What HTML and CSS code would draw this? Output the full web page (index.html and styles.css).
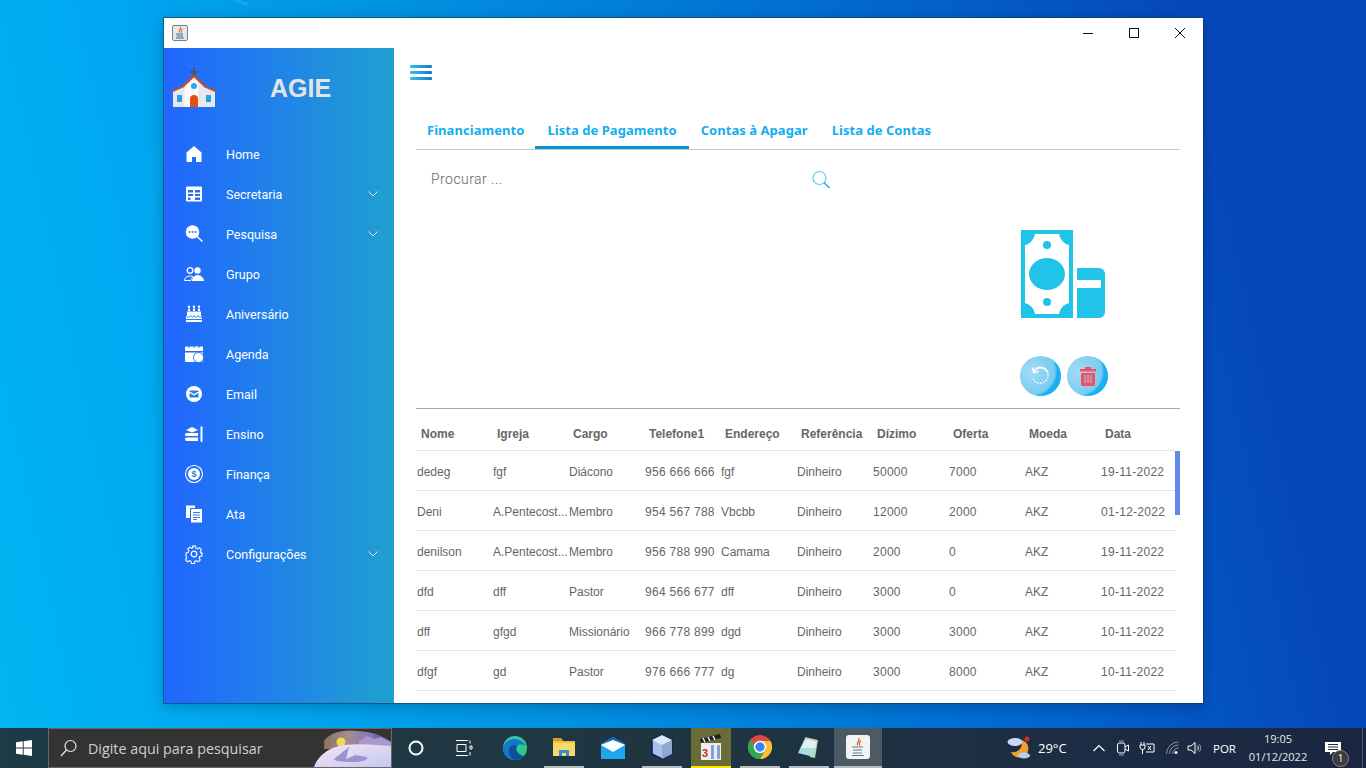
FILE: index.html
```html
<!DOCTYPE html>
<html lang="pt">
<head>
  <meta charset="UTF-8">
  <title>AGIE</title>
  <link rel="stylesheet" href="styles.css">
</head>
<body>
  <div class="desktop">
    <div class="streak"></div>

    <div class="window">
      <div class="titlebar">
        <svg class="app-icon" width="16" height="16" viewBox="0 0 16 16"><rect x=".5" y=".5" width="15" height="15" rx="1.5" fill="#e6e9ee" stroke="#6f8296"/><path d="M8.500 2c1.200 2-2.500 3-1 5.500M10.500 4c-1.500 1-1.500 2.500-.5 3.500" stroke="#f07818" stroke-width="1.300" fill="none"/><path d="M4 9h7M4.500 11h6.500M4 13h8" stroke="#44688e"/></svg>
        <div class="win-btns">
          <svg width="12" height="12" viewBox="0 0 12 12"><path d="M1 6.500h10" stroke="#111"/></svg>
          <svg width="12" height="12" viewBox="0 0 12 12"><rect x="1.500" y="1.500" width="9" height="9" fill="none" stroke="#111"/></svg>
          <svg width="12" height="12" viewBox="0 0 12 12"><path d="M1 1l10 10M11 1L1 11" stroke="#111"/></svg>
        </div>
      </div>

      <div class="app">
        <aside class="sidebar">
          <div class="brand">
            <svg class="church" width="44" height="40" viewBox="0 0 44 40">
              <path d="M21.200 0h1.600v3h3v1.600h-3V8h-1.600V4.600h-3V3h3z" fill="#5d4a40"/>
              <path d="M1 23l12-6v22H1z" fill="#e4e8ec"/>
              <path d="M43 23l-12-6v22h12z" fill="#e4e8ec"/>
              <path d="M12.500 16.500L22 8l9.500 8.500V39h-19z" fill="#fafafa"/>
              <path d="M31.500 39H26V12l5.500 4.500z" fill="#e6eaee"/>
              <path d="M0 23.500l12.500-5.500M44 23.500l-12.500-5.500" stroke="#d4451a" stroke-width="1.800" fill="none"/>
              <path d="M12 17.500L22 8l10 9.500" stroke="#d4451a" stroke-width="2" fill="none"/>
              <circle cx="22" cy="18" r="3" fill="#2aa8e8"/>
              <path d="M18 39v-8a4 4 0 0 1 8 0v8z" fill="#e2500f"/>
              <rect x="5" y="27" width="5" height="7" fill="#2aa0e0"/>
              <rect x="34" y="27" width="5" height="7" fill="#2aa0e0"/>
            </svg>
            <span class="brand-name">AGIE</span>
          </div>

          <nav class="menu">
            <div class="menu-item">
              <svg class="menu-icon" viewBox="0 0 20 20"><path d="M10 2l7.500 6.500V18H12v-5H8v5H2.500V8.500z" fill="#fff"/></svg>
              <span>Home</span>
            </div>
            <div class="menu-item">
              <svg class="menu-icon" viewBox="0 0 20 20"><path fill-rule="evenodd" d="M3 2.500h14a1 1 0 0 1 1 1v13a1 1 0 0 1-1 1H3a1 1 0 0 1-1-1v-13a1 1 0 0 1 1-1zM4 6v2.500h5V6zm7 0v2.500h5V6zM4 10v2h5v-2zm7 0v2h5v-2zm-7 3.500V16h2.500v-2.500zm7 0V16h5v-2.500z" fill="#fff"/></svg>
              <span>Secretaria</span>
              <svg class="chevron" width="10" height="6" viewBox="0 0 10 6"><path d="M.5.500L5 5 9.500.500" fill="none" stroke="#dfeaf8"/></svg>
            </div>
            <div class="menu-item">
              <svg class="menu-icon" viewBox="0 0 20 20"><circle cx="8.500" cy="8" r="6.800" fill="#fff"/><path d="M13 12.500l5.500 5" stroke="#fff" stroke-width="1.600"/><circle cx="5.500" cy="8" r="1" fill="#2a7ce8"/><circle cx="8.500" cy="8" r="1" fill="#2a7ce8"/><circle cx="11.500" cy="8" r="1" fill="#2a7ce8"/></svg>
              <span>Pesquisa</span>
              <svg class="chevron" width="10" height="6" viewBox="0 0 10 6"><path d="M.5.500L5 5 9.500.500" fill="none" stroke="#dfeaf8"/></svg>
            </div>
            <div class="menu-item">
              <svg class="menu-icon" viewBox="0 0 20 20"><circle cx="6" cy="6.500" r="2.800" fill="none" stroke="#fff" stroke-width="1.300"/><circle cx="13.500" cy="6.500" r="3.200" fill="#fff"/><path d="M.5 16.500c0-2.500 2.500-4.500 5.500-4.500 1.200 0 2.300.3 3 .7-1.300 1-2 2.500-2 3.800z" fill="none" stroke="#fff" stroke-width="1"/><path d="M8 17c0-3 2.500-6 5.500-6s6.500 3 6.500 6z" fill="#fff"/></svg>
              <span>Grupo</span>
            </div>
            <div class="menu-item">
              <svg class="menu-icon" viewBox="0 0 20 20"><circle cx="5" cy="2.800" r="1.200" fill="#fff"/><circle cx="10" cy="2.800" r="1.200" fill="#fff"/><circle cx="15" cy="2.800" r="1.200" fill="#fff"/><path d="M4 4.500h2v2.500H4zM9 4.500h2v2.500H9zM14 4.500h2v2.500h-2z" fill="#fff"/><path d="M3 7.500h14V12H3zM2 12h16v6H2z" fill="#fff"/><path d="M2 11.500c2 2.500 3 2.500 4.500 0 1.500 2.500 3 2.500 3.500 0 1.500 2.500 3 2.500 4 0 1 1.500 2.500 2 4 1.500M2 15.500h16" stroke="#2a7ce8" stroke-width="1" fill="none"/></svg>
              <span>Aniversário</span>
            </div>
            <div class="menu-item">
              <svg class="menu-icon" viewBox="0 0 20 20"><path d="M2 2.500h16a1 1 0 0 1 1 1V7H1V3.500a1 1 0 0 1 1-1zM1 8.500h18V17a1 1 0 0 1-1 1H2a1 1 0 0 1-1-1z" fill="#fff"/><path d="M5 2v2M10 2v2M15 2v2" stroke="#2a7ce8"/><circle cx="14.500" cy="13.500" r="5" fill="#fff" stroke="#2a7ce8"/></svg>
              <span>Agenda</span>
            </div>
            <div class="menu-item">
              <svg class="menu-icon" viewBox="0 0 20 20"><circle cx="10" cy="10" r="8" fill="#fff"/><path d="M5.500 6.500h9v1L10 10 5.500 7.500zM5.500 9l4.500 2.500L14.500 9v4.500h-9z" fill="#2a7ce8"/></svg>
              <span>Email</span>
            </div>
            <div class="menu-item">
              <svg class="menu-icon" viewBox="0 0 20 20"><path d="M2 6l6-3 6 3-6 2.500z" fill="#fff"/><path d="M3 9h11v3H3a1.500 1.500 0 0 1-2-1.500A1.500 1.500 0 0 1 3 9zM3 13.500h11v3.500H3a1.700 1.700 0 0 1-2-1.700 1.700 1.700 0 0 1 2-1.800z" fill="#fff"/><path d="M16.500 2.500H18.500V17l-1 1.500-1-1.500z" fill="#fff"/></svg>
              <span>Ensino</span>
            </div>
            <div class="menu-item">
              <svg class="menu-icon" viewBox="0 0 20 20"><circle cx="10" cy="10" r="8.500" fill="none" stroke="#fff" stroke-width="1.100"/><circle cx="10" cy="10" r="6" fill="#fff"/><text x="10" y="13" class="coin-mark">$</text></svg>
              <span>Finança</span>
            </div>
            <div class="menu-item">
              <svg class="menu-icon" viewBox="0 0 20 20"><path d="M2 1.500h9v2.500H6v10H2z" fill="#fff"/><path d="M7 5h11v13.500H7z" fill="#fff"/><path d="M9 8.500h7M9 11h7M9 13.500h7M9 15.500h4" stroke="#2a7ce8"/></svg>
              <span>Ata</span>
            </div>
            <div class="menu-item">
              <svg class="menu-icon" viewBox="0 0 20 20"><circle cx="10" cy="10" r="2.800" fill="none" stroke="#fff" stroke-width="1.200"/><path d="M8.500 2h3l.4 2.200 1.600.7 1.900-1.200 2 2-1.200 1.900.7 1.600L18 9v3l-2.200.4-.7 1.600 1.200 1.900-2 2-1.900-1.200-1.600.7-.4 2.100h-3l-.4-2.100-1.600-.7-1.900 1.200-2-2 1.200-1.900-.7-1.600L2 12V9l2.200-.4.700-1.600-1.200-1.900 2-2 1.900 1.200 1.500-.7z" fill="none" stroke="#fff" stroke-width="1.100"/></svg>
              <span>Configurações</span>
              <svg class="chevron" width="10" height="6" viewBox="0 0 10 6"><path d="M.5.500L5 5 9.500.500" fill="none" stroke="#dfeaf8"/></svg>
            </div>
          </nav>
        </aside>

        <main class="content">
          <div class="hamburger"><i></i><i></i><i></i></div>

          <div class="tabs">
            <div class="tab">Financiamento</div>
            <div class="tab active">Lista de Pagamento</div>
            <div class="tab">Contas à Apagar</div>
            <div class="tab">Lista de Contas</div>
          </div>

          <div class="search">
            <span class="search-text">Procurar ...</span>
            <svg class="search-icon" width="20" height="20" viewBox="0 0 20 20"><circle cx="8.500" cy="8" r="6.500" fill="none" stroke="#5cd0ee" stroke-width="1.200"/><path d="M13 12.500l5.500 5.500" stroke="#38a8d8" stroke-width="1.500"/></svg>
          </div>

          <div class="tools">
            <svg class="money" width="84" height="88" viewBox="0 0 84 88">
              <rect width="52" height="88" fill="#22c3e8"/>
              <path d="M14 4h24q2 9 10 11v58q-8 2-10 11H14q-2-9-10-11V15q8-2 10-11z" fill="#fff"/>
              <circle cx="26" cy="15" r="4" fill="#22c3e8"/>
              <circle cx="26" cy="72" r="4" fill="#22c3e8"/>
              <ellipse cx="26" cy="44" rx="18" ry="16" fill="#22c3e8"/>
              <path d="M56 38h22a6 6 0 0 1 6 6v38a6 6 0 0 1-6 6H56z" fill="#22c3e8"/>
              <rect x="56" y="50" width="24" height="8" fill="#fff"/>
            </svg>
            <div class="round-btns">
              <div class="round-btn">
                <svg width="22" height="22" viewBox="0 0 22 22"><path d="M4 5a8 8 0 1 1 -1 9" fill="none" stroke="#fff" stroke-width="1.500" stroke-dasharray="1.500 1.500"/><path d="M4 6.500a8 8 0 0 1 14 1" fill="none" stroke="#fff" stroke-width="1.500"/><path d="M2.500 2.500l1 5 5-1" fill="none" stroke="#fff" stroke-width="1.500"/></svg>
              </div>
              <div class="round-btn">
                <svg width="18" height="20" viewBox="0 0 18 20"><path d="M6 1h6v2h5v2.500H1V3h5z" fill="#f25060"/><path d="M2 7h14v11a2 2 0 0 1-2 2H4a2 2 0 0 1-2-2z" fill="#f25060"/><path d="M6 9v8M9 9v8M12 9v8" stroke="#8ccaf0" stroke-width="1.200"/></svg>
              </div>
            </div>
          </div>

          <div class="table">
            <div class="t-head">
              <span>Nome</span><span>Igreja</span><span>Cargo</span><span>Telefone1</span><span>Endereço</span><span>Referência</span><span>Dízimo</span><span>Oferta</span><span>Moeda</span><span>Data</span>
            </div>
            <div class="t-body">
              <div class="t-rows">
                <div class="t-row"><span>dedeg</span><span>fgf</span><span>Diácono</span><span>956 666 666</span><span>fgf</span><span>Dinheiro</span><span>50000</span><span>7000</span><span>AKZ</span><span>19-11-2022</span></div>
                <div class="t-row"><span>Deni</span><span>A.Pentecost...</span><span>Membro</span><span>954 567 788</span><span>Vbcbb</span><span>Dinheiro</span><span>12000</span><span>2000</span><span>AKZ</span><span>01-12-2022</span></div>
                <div class="t-row"><span>denilson</span><span>A.Pentecost...</span><span>Membro</span><span>956 788 990</span><span>Camama</span><span>Dinheiro</span><span>2000</span><span>0</span><span>AKZ</span><span>19-11-2022</span></div>
                <div class="t-row"><span>dfd</span><span>dff</span><span>Pastor</span><span>964 566 677</span><span>dff</span><span>Dinheiro</span><span>3000</span><span>0</span><span>AKZ</span><span>10-11-2022</span></div>
                <div class="t-row"><span>dff</span><span>gfgd</span><span>Missionário</span><span>966 778 899</span><span>dgd</span><span>Dinheiro</span><span>3000</span><span>3000</span><span>AKZ</span><span>10-11-2022</span></div>
                <div class="t-row"><span>dfgf</span><span>gd</span><span>Pastor</span><span>976 666 777</span><span>dg</span><span>Dinheiro</span><span>3000</span><span>8000</span><span>AKZ</span><span>10-11-2022</span></div>
              </div>
              <div class="scrollbar"><div class="thumb"></div></div>
            </div>
          </div>
        </main>
      </div>
    </div>
  </div>

  <footer class="taskbar">
    <div class="start">
      <svg width="16" height="16" viewBox="0 0 16 16"><path d="M0 2.300l6.800-1v6.200H0zM7.700 1.200L16 0v7.500H7.700zM0 8.400h6.800v6.300l-6.800-1zM7.700 8.400H16V16l-8.300-1.200z" fill="#fff"/></svg>
    </div>
    <div class="searchbox">
      <svg width="18" height="18" viewBox="0 0 18 18"><circle cx="10.500" cy="7" r="5.500" fill="none" stroke="#e8e8e8" stroke-width="1.200"/><path d="M6.500 11L1 17" stroke="#e8e8e8" stroke-width="1.300"/></svg>
      <span>Digite aqui para pesquisar</span>
      <svg class="search-art" width="77" height="38" viewBox="0 0 77 38">
        <defs>
          <linearGradient id="artSky" x1="0" y1="0" x2="1" y2="0"><stop offset="0" stop-color="#8a7460"/><stop offset=".35" stop-color="#a08c90"/><stop offset=".7" stop-color="#8878b8"/><stop offset="1" stop-color="#4a4650"/></linearGradient>
          <linearGradient id="artSnow" x1="0" y1="0" x2="1" y2="1"><stop offset="0" stop-color="#f6e4f4"/><stop offset="1" stop-color="#c4c8f2"/></linearGradient>
        </defs>
        <path d="M10 12C16 3 30 0 44 2c14 1 26 5 33 10v8H10z" fill="url(#artSky)"/>
        <circle cx="27" cy="13" r="4.500" fill="#f4d850"/>
        <path d="M45 12l8-5 7 3 7-2 10 5v5H45z" fill="#a89ad0"/>
        <path d="M0 38c4-12 16-20 30-22 16-2 34 0 47 1v21z" fill="url(#artSnow)"/>
        <path d="M20 30l15-12 6 8 12 2c2 3-6 5-14 5-10 0-20-1-19-3z" fill="#9a94d0"/>
        <path d="M35 18l6 8-9 4z" fill="#e6e0f6"/>
      </svg>
    </div>
    <div class="task-icons">
      <div class="task-btn"><svg width="18" height="18" viewBox="0 0 18 18"><circle cx="9" cy="9" r="6.500" fill="none" stroke="#fff" stroke-width="2"/></svg></div>
      <div class="task-btn"><svg width="18" height="16" viewBox="0 0 18 16"><path d="M1 .5h12M1 15.500h12M2 4.500h9v7H2z" fill="none" stroke="#fff"/><path d="M15 .5v3M15 12v3.500M15 6h2v3h-2z" fill="none" stroke="#fff"/></svg></div>
      <div class="app-btn first"><svg width="24" height="24" viewBox="0 0 24 24"><defs><linearGradient id="edgeA" x1="0" y1="0" x2="1" y2="1"><stop offset="0" stop-color="#35c9c0"/><stop offset="1" stop-color="#2ec86a"/></linearGradient></defs><circle cx="12" cy="12" r="12" fill="url(#edgeA)"/><path d="M0 12C1 6 6 3 11 3c5 0 9 2 12 7-3-2-7-2-9 0-2 3 0 7 4 9 2 1 3 1 4 .5C19 23 15 24 12 24 5 24 0 19 0 12z" fill="#1578c8"/><path d="M6 13c1-4 6-5 8-3-2 3 0 7 4 9 2 1 3 1 4 .5C19 23 15 24 12 24 8 23 5 18 6 13z" fill="#0e4f98"/></svg></div>
      <div class="app-btn used"><svg width="22" height="18" viewBox="0 0 22 18"><path d="M0 0h8l2 3h12v15H0z" fill="#f2c23e"/><path d="M0 0h8l2 3H0z" fill="#d89a20"/><path d="M0 5h22v13H0z" fill="#fbd968"/><path d="M6 12h10v6h-3v-3H9v3H6z" fill="#2f8fd8"/></svg></div>
      <div class="app-btn"><svg width="24" height="22" viewBox="0 0 24 22"><path d="M0 7l12-7 12 7v15H0z" fill="#1fa4ee"/><path d="M12 0l12 7-12 5L0 7z" fill="#0f6fc0"/><path d="M0 8l12 7 12-7-2-1-10-4L2 7z" fill="#fff"/><path d="M0 9l12 7 12-7v13H0z" fill="#1fa4ee"/></svg></div>
      <div class="app-btn used"><svg width="24" height="26" viewBox="0 0 24 26"><path d="M12 1l10 5v14l-10 5-10-5V6z" fill="#a8c0e8" stroke="#14205a" stroke-width="1.600"/><path d="M12 1l10 5-10 5L2 6z" fill="#dce8f4"/><path d="M12 11l10-5v14l-10 5z" fill="#8fa8d0"/></svg></div>
      <div class="app-btn clapper"><svg width="24" height="26" viewBox="0 0 24 26"><path d="M1 5l20-5 1 4-20 5z" fill="#222"/><path d="M4 4l2 4M9 3l2 4M14 2l2 4" stroke="#eee" stroke-width="1.500"/><rect x="2" y="9" width="20" height="17" fill="#eee"/><text x="3" y="23" class="clap-num">3</text><rect x="12" y="11" width="3" height="14" fill="#8aa0d8"/><rect x="18" y="11" width="3" height="14" fill="#8aa0d8"/></svg></div>
      <div class="app-btn used"><svg width="24" height="24" viewBox="0 0 24 24"><circle cx="12" cy="12" r="12" fill="#dd4b3e"/><path d="M12 12L1.600 6A12 12 0 0 0 12 24l6-10z" fill="#2fa84f"/><path d="M12 6h10.400A12 12 0 0 1 12 24l6-10z" fill="#fbc02d"/><circle cx="12" cy="12" r="5.500" fill="#3f83f0" stroke="#fff" stroke-width="1.500"/></svg></div>
      <div class="app-btn used near"><svg width="24" height="24" viewBox="0 0 24 24"><path d="M8 2l13 3-3 18-5-1z" fill="#d8c8a0"/><path d="M8 3l12 3-3 16L1 18z" fill="#a8dce0"/><path d="M9 4l11 3-2 6L4 13z" fill="#dff2f2"/></svg></div>
      <div class="app-btn java"><svg width="24" height="24" viewBox="0 0 24 24"><rect width="24" height="24" rx="3" fill="#f2f3f3"/><path d="M13 3c1.500 3-3 4-1.500 7.500M15 6c-2 1-2 3-1 4.500" stroke="#d8662a" stroke-width="1.300" fill="none"/><path d="M6 12h11M7 15h9M7 18h9M6 20.500h12" stroke="#5a7a9a" stroke-width="1.200"/></svg></div>
    </div>
    <div class="tray">
      <svg class="weather" width="24" height="24" viewBox="0 0 24 24"><path d="M15 4a9 9 0 1 1-11 12c7 1 12-4 11-12z" fill="#f0a030"/><circle cx="20" cy="3" r="2.500" fill="#d03020"/><ellipse cx="8" cy="6" rx="7.500" ry="4" fill="#c8d8f0"/><ellipse cx="17" cy="19.500" rx="6" ry="3" fill="#b8d0f0"/></svg>
      <span class="temp">29°C</span>
      <svg class="tray-up" width="12" height="8" viewBox="0 0 12 8"><path d="M.5 7L6 1.500 11.500 7" fill="none" stroke="#fff" stroke-width="1.200"/></svg>
      <svg class="tray-meet" width="12" height="16" viewBox="0 0 12 16"><rect x=".5" y="3" width="7.500" height="10" rx="2" fill="none" stroke="#fff"/><path d="M8 7l3.500-2v6L8 9" fill="none" stroke="#fff"/><path d="M2 1h5M2 15h5" stroke="#99a4ae"/></svg>
      <svg class="tray-power" width="16" height="14" viewBox="0 0 16 14"><path d="M2 1v3M5 1v3M1 4h5v2a2 2 0 0 1-5 0zM3.500 8v5" fill="none" stroke="#fff"/><path d="M7 3h8v8H7" fill="none" stroke="#fff"/><path d="M9 5l3 4M12 5l-3 4" stroke="#fff"/></svg>
      <svg class="tray-wifi" width="13" height="14" viewBox="0 0 13 14"><path d="M.5 13a12 12 0 0 1 12-12M3.500 13a9 9 0 0 1 9-9M6.500 13a6 6 0 0 1 6-6" fill="none" stroke="#8a949e"/><circle cx="10" cy="11.500" r="1.500" fill="#fff"/></svg>
      <svg class="tray-sound" width="16" height="14" viewBox="0 0 16 14"><path d="M1 5h3l4-3.500v11L4 9H1z" fill="none" stroke="#fff"/><path d="M10 4.500a3 3 0 0 1 0 5" fill="none" stroke="#fff"/><path d="M12 3a5.500 5.500 0 0 1 0 8" fill="none" stroke="#8a949e"/></svg>
      <span class="lang">POR</span>
      <div class="clock"><span>19:05</span><span>01/12/2022</span></div>
      <div class="notif">
        <svg width="16" height="13" viewBox="0 0 16 13"><path d="M0 0h16v10H8l-3 3v-3H0z" fill="#fff"/><path d="M3 2.500h10M3 5h10M3 7.500h10" stroke="#1d2e40"/></svg>
        <span class="notif-badge">1</span>
      </div>
      <div class="show-desk"></div>
    </div>
  </footer>
</body>
</html>
```

FILE: styles.css
```css
html, body {
  margin: 0;
  padding: 0;
  height: 100%;
  overflow: hidden;
}
body {
  font-family: "Liberation Sans", Arial, sans-serif;
  display: flex;
  flex-direction: column;
}
.desktop {
  position: relative;
  height: 728px;
  flex: none;
  overflow: hidden;
  background: linear-gradient(78deg, #00b6f2 0%, #00a8f2 16%, #0090e2 38%, #0070d4 62%, #0648bc 88%, #0648bc 100%);
}
.streak {
  position: absolute;
  left: 180px;
  top: -10px;
  width: 70px;
  height: 3px;
  background: rgba(255, 255, 255, 0.1);
  transform: rotate(22deg);
}

/* app window */
.window {
  position: absolute;
  left: 164px;
  top: 18px;
  width: 1039px;
  height: 685px;
  background: #fff;
  box-shadow: 0 0 0 1px rgba(20, 50, 90, 0.55), 0 3px 14px rgba(0, 0, 0, 0.25);
  display: flex;
  flex-direction: column;
  overflow: hidden;
}
.titlebar {
  height: 30px;
  flex: none;
  display: flex;
  align-items: center;
  justify-content: space-between;
  padding-left: 8px;
}
.win-btns {
  display: flex;
  gap: 34px;
  padding-right: 17px;
}
.win-btns svg {
  display: block;
}
.app {
  flex: 1;
  display: flex;
  min-height: 0;
}

/* sidebar */
.sidebar {
  width: 230px;
  flex: none;
  background: linear-gradient(90deg, #2166ff, #20a0d0);
  color: #fff;
}
.brand {
  height: 86px;
  display: flex;
  align-items: flex-start;
  padding: 20px 0 0 8px;
  box-sizing: border-box;
}
.brand-name {
  margin: 6px 0 0 54px;
  font-size: 25px;
  font-weight: bold;
  color: #e4e4e4;
}
.menu-item {
  height: 40px;
  display: flex;
  align-items: center;
  font-family: Roboto, "Liberation Sans", sans-serif;
  font-size: 12.5px;
  padding-left: 20px;
  padding-right: 16px;
}
.menu-icon {
  width: 20px;
  height: 20px;
  margin-right: 22px;
  flex: none;
}
.chevron {
  margin-left: auto;
}
.coin-mark {
  font-family: "Liberation Sans", sans-serif;
  font-size: 9px;
  font-weight: bold;
  text-anchor: middle;
  fill: #2a7ce8;
}

/* main */
.content {
  flex: 1;
  min-width: 0;
  padding: 0 23px 0 22px;
  display: flex;
  flex-direction: column;
}
.hamburger {
  margin: 17px 0 0 -6px;
  width: 22px;
  display: flex;
  flex-direction: column;
  gap: 3px;
}
.hamburger i {
  display: block;
  height: 3px;
  border-radius: 1px;
  background: linear-gradient(90deg, #35c0ee, #1478c8);
}
.tabs {
  margin-top: 33px;
  height: 36px;
  flex: none;
  display: flex;
  border-bottom: 1px solid #c8c8c8;
}
.tab {
  padding: 0 12px;
  font-family: "Noto Sans", sans-serif;
  font-size: 13px;
  font-weight: bold;
  letter-spacing: 0.05px;
  line-height: 34px;
  color: #12aef0;
  box-sizing: border-box;
  height: 36px;
}
.tab:first-child {
  padding-left: 11px;
  padding-right: 11px;
}
.tab.active {
  border-bottom: 3px solid #0098d8;
}
.search {
  height: 58px;
  width: 415px;
  flex: none;
  padding-left: 15px;
  display: flex;
  align-items: center;
  justify-content: space-between;
  box-sizing: border-box;
}
.search-text {
  font-family: Roboto, sans-serif;
  font-size: 14px;
  font-weight: 300;
  letter-spacing: 0.45px;
  color: #666;
}
.search-icon {
  margin-top: 2px;
}
.tools {
  height: 201px;
  flex: none;
  display: flex;
  flex-direction: column;
  padding: 22px 0 0 605px;
  box-sizing: border-box;
  border-bottom: 1px solid #aaa;
}
.money {
  display: block;
  flex: none;
}
.round-btns {
  display: flex;
  gap: 6px;
  margin: 38px 0 0 -1px;
}
.round-btn {
  width: 41px;
  height: 40px;
  border-radius: 50%;
  background: radial-gradient(circle at 28% 38%, #a4daf6 0%, #78ccf2 60%, #1eaff0 67%, #14a8f0 100%);
  display: flex;
  align-items: center;
  justify-content: center;
}

/* table */
.table {
  width: 764px;
  flex: none;
  font-size: 12px;
  color: #666;
}
.t-head, .t-row {
  display: grid;
  grid-template-columns: repeat(10, 76px);
}
.t-head {
  height: 42px;
  width: 759px;
  padding-top: 9px;
  align-items: center;
  font-weight: bold;
  border-bottom: 1px solid #e4e4e4;
  box-sizing: border-box;
}
.t-head span {
  padding-left: 5px;
}
.t-body {
  display: flex;
}
.t-rows {
  width: 759px;
  flex: none;
}
.t-row {
  height: 40px;
  padding-top: 2px;
  align-items: center;
  border-bottom: 1px solid #e4e4e4;
  box-sizing: border-box;
}
.t-row span {
  padding-left: 1px;
  white-space: nowrap;
}
.t-row span:nth-child(4),
.t-row span:nth-child(7),
.t-row span:nth-child(8),
.t-row span:nth-child(10) {
  letter-spacing: 0.28px;
}
.scrollbar {
  width: 5px;
}
.thumb {
  height: 64px;
  background: #6088e8;
}

/* windows taskbar */
.taskbar {
  height: 40px;
  flex: none;
  display: flex;
  align-items: center;
  background: linear-gradient(90deg, #1d3a46 0%, #1f3642 50%, #1c2c44 80%, #1a2640 100%);
  color: #fff;
}
.start {
  width: 48px;
  flex: none;
  display: flex;
  justify-content: center;
}
.searchbox {
  position: relative;
  width: 344px;
  height: 40px;
  flex: none;
  background: #333;
  border: 1px solid #666;
  box-sizing: border-box;
  display: flex;
  align-items: center;
  padding-left: 11px;
  overflow: hidden;
  font-family: "Open Sans", "Noto Sans", sans-serif;
  font-size: 14.3px;
  color: #d0d0d0;
}
.searchbox span {
  margin-left: 10px;
}
.search-art {
  position: absolute;
  right: 0;
  top: 0;
}
.task-icons {
  display: flex;
  height: 40px;
  flex: none;
}
.task-btn {
  width: 48px;
  height: 40px;
  display: flex;
  align-items: center;
  justify-content: center;
  flex: none;
}
.app-btn {
  width: 40px;
  height: 40px;
  margin-right: 9px;
  display: flex;
  align-items: center;
  justify-content: center;
  box-sizing: border-box;
  flex: none;
}
.app-btn.first {
  margin-left: 7px;
}
.app-btn.near {
  margin-right: 5px;
}
.used {
  border-bottom: 2px solid #b8bcc0;
}
.clapper {
  background: #6a6c38;
  border-bottom: 2px solid #ffe600;
}
.clap-num {
  font-family: "Liberation Sans", sans-serif;
  font-size: 11px;
  font-weight: bold;
  fill: #c83018;
}
.app-btn.java {
  width: 48px;
  margin-right: 0;
  background: #4c5a64;
  border-bottom: 2px solid #b8bcc0;
}
.tray {
  flex: 1;
  display: flex;
  align-items: center;
  position: relative;
  height: 40px;
  font-family: "Open Sans", "Noto Sans", sans-serif;
  padding-left: 125px;
}
.tray svg {
  flex: none;
}
.temp {
  font-size: 13px;
  width: 29px;
  margin-left: 7px;
  white-space: nowrap;
}
.tray-up { margin-left: 26px; }
.tray-meet { margin-left: 12px; }
.tray-power { margin-left: 10px; }
.tray-wifi { margin-left: 11px; }
.tray-sound { margin-left: 8px; }
.lang {
  width: 23px;
  margin-left: 10px;
  font-size: 11.5px;
  white-space: nowrap;
}
.clock {
  width: 58px;
  margin-left: 13px;
  display: flex;
  flex-direction: column;
  align-items: center;
  font-size: 11px;
  line-height: 18px;
  color: #e8e8e8;
  white-space: nowrap;
}
.notif {
  position: relative;
  margin-left: 18px;
  line-height: 0;
}
.notif-badge {
  position: absolute;
  left: 7px;
  top: 8px;
  width: 17px;
  height: 17px;
  line-height: 15px;
  border-radius: 50%;
  background: #3c3c3c;
  border: 1px solid #8a8a8a;
  text-align: center;
  font-size: 10px;
  box-sizing: border-box;
}
.show-desk {
  position: absolute;
  right: 3px;
  top: 0;
  width: 1px;
  height: 40px;
  background: #4a5a68;
}
```
